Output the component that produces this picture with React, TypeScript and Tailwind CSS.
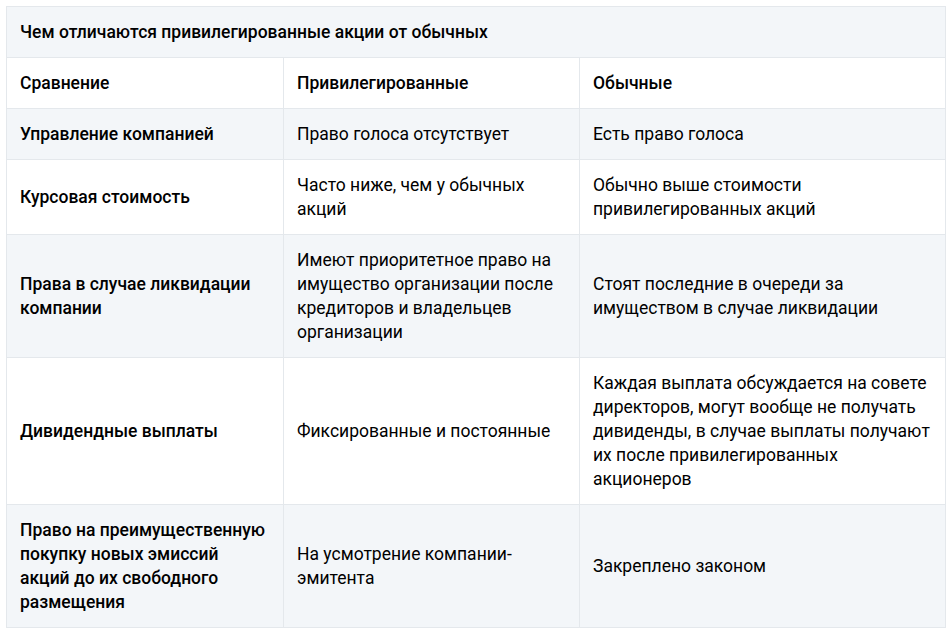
const rows: { label: string; pref: string; common: string }[] = [
  {
    label: 'Управление компанией',
    pref: 'Право голоса отсутствует',
    common: 'Есть право голоса',
  },
  {
    label: 'Курсовая стоимость',
    pref: 'Часто ниже, чем у обычных акций',
    common: 'Обычно выше стоимости привилегированных акций',
  },
  {
    label: 'Права в случае ликвидации компании',
    pref: 'Имеют приоритетное право на имущество организации после кредиторов и владельцев организации',
    common: 'Стоят последние в очереди за имуществом в случае ликвидации',
  },
  {
    label: 'Дивидендные выплаты',
    pref: 'Фиксированные и постоянные',
    common:
      'Каждая выплата обсуждается на совете директоров, могут вообще не получать дивиденды, в случае выплаты получают их после привилегированных акционеров',
  },
  {
    label: 'Право на преимущественную покупку новых эмиссий акций до их свободного размещения',
    pref: 'На усмотрение компании-эмитента',
    common: 'Закреплено законом',
  },
];

const cell = 'border border-[#e4e8ec] px-[13px] py-[13px] align-middle';

export default function App() {
  return (
    <div className="min-h-screen bg-white pl-[6px] pt-[6px] font-['Roboto',sans-serif] text-[17.5px] leading-[24px] text-black">
      <table className="w-[940px] table-fixed border-collapse">
        <colgroup>
          <col className="w-[277px]" />
          <col className="w-[296px]" />
          <col />
        </colgroup>
        <tbody>
          {/* title */}
          <tr className="bg-[#f3f6f9]">
            <td colSpan={3} className={`${cell} font-medium`}>
              Чем отличаются привилегированные акции от обычных
            </td>
          </tr>
          <tr className="bg-white">
            <td className={`${cell} font-medium`}>Сравнение</td>
            <td className={`${cell} font-medium`}>Привилегированные</td>
            <td className={`${cell} font-medium`}>Обычные</td>
          </tr>
          {rows.map((r, i) => (
            <tr key={r.label} className={i % 2 === 0 ? 'bg-[#f3f6f9]' : 'bg-white'}>
              <td className={`${cell} font-medium`}>{r.label}</td>
              <td className={cell}>{r.pref}</td>
              <td className={cell}>{r.common}</td>
            </tr>
          ))}
        </tbody>
      </table>
    </div>
  );
}
